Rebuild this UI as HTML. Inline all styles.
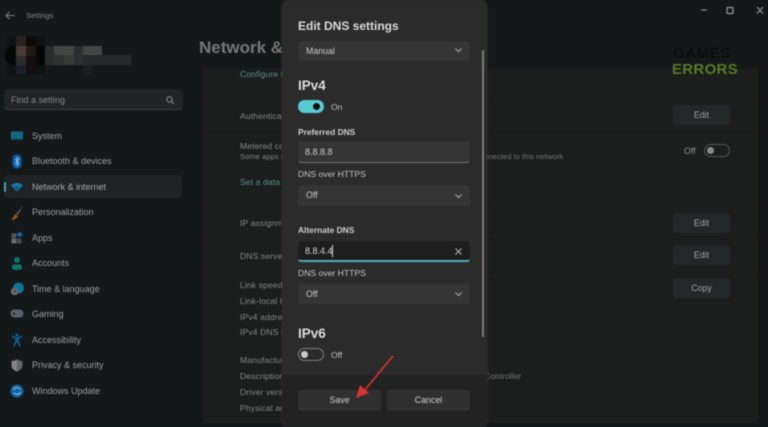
<!DOCTYPE html>
<html><head><meta charset="utf-8"><style>
html,body{margin:0;padding:0;background:#141819}
#r{position:relative;width:768px;height:427px;overflow:hidden;background:#141819;font-family:"Liberation Sans",sans-serif;color:#b5b6b6;font-size:9px;filter:blur(.4px)}
#r div,#r span.a{position:absolute}
.t{white-space:nowrap;line-height:12px}
.n{font-size:9px;color:#9d9e9e;left:32px;white-space:nowrap;line-height:12px}
.l{left:240px;font-size:8.6px;color:#858786;white-space:nowrap;line-height:12px;letter-spacing:.1px}
.lk{color:#5a8d8c}
.b{left:673px;width:57px;height:20px;background:#242727;border-radius:3px;color:#a0a1a1;font-size:8.8px;text-align:center;line-height:20px}
.dd{left:298px;width:172px;height:20px;background:#353535;border-radius:3px;color:#c8c8c8;font-size:8.8px;line-height:20px;text-indent:8px}
.lb{left:298px;color:#cdcdcd;font-size:8.4px;font-weight:bold;line-height:12px;white-space:nowrap}
.lc{left:298px;color:#c4c4c4;font-size:8.6px;line-height:12px;white-space:nowrap}
.h{left:298px;color:#dcdcdc;font-size:13.5px;font-weight:bold;line-height:16px}
svg{position:absolute;overflow:visible}
</style></head><body><div id="r">

<!-- title bar -->
<svg style="left:5px;top:11px" width="12" height="10" fill="none" stroke="#7f8080" stroke-width="1"><path d="M1 4.500H9.500M4.500 1L1 4.500L4.500 8"/></svg>
<div class="t" style="left:26px;top:10px;font-size:7.6px;color:#858686">Settings</div>
<svg style="left:697px;top:5px" width="66" height="14" fill="none" stroke="#9a9b9b" stroke-width="1"><path d="M4 5H10"/><rect x="30" y="2.500" width="6" height="6" rx="1" stroke-width="1.200"/><path d="M60 2L66 8.500M66 2L60 8.500"/></svg>

<!-- avatar -->
<div style="left:7px;top:36px;width:38px;height:38px;background:#0a0b0b;opacity:.5"></div>
<div style="left:5px;top:46px;width:40px;height:19px;background:#050606;border-radius:9px 0 0 9px"></div>
<div style="left:16px;top:36px;width:10px;height:10px;background:#2a211c"></div>
<div style="left:16px;top:46px;width:10px;height:10px;background:#4a3d35"></div>
<div style="left:16px;top:56px;width:10px;height:9px;background:#2c2c2f"></div>
<div style="left:16px;top:65px;width:10px;height:9px;background:#1d2029"></div>
<div style="left:26px;top:36px;width:10px;height:10px;background:#0c0b0a"></div>
<div style="left:26px;top:46px;width:10px;height:10px;background:#211914"></div>
<div style="left:26px;top:56px;width:10px;height:18px;background:#120e0c"></div>
<div style="left:45px;top:46px;width:9px;height:19px;background:#2a2d2e"></div>
<div style="left:54px;top:46px;width:20px;height:9px;background:#444646"></div>
<div style="left:54px;top:55px;width:10px;height:10px;background:#303333"></div>
<div style="left:64px;top:55px;width:10px;height:10px;background:#373a3a"></div>
<div style="left:74px;top:46px;width:9px;height:19px;background:#2c2f2f"></div>
<div style="left:83px;top:46px;width:19px;height:9px;background:#444646"></div>
<div style="left:83px;top:55px;width:48px;height:10px;background:#272a2a"></div>
<div style="left:83px;top:65px;width:9px;height:9px;background:#1c1f1f"></div>

<!-- search -->
<div style="left:4px;top:89px;width:179px;height:21px;background:#212424;border-radius:4px;border-bottom:1px solid #3a3c3c;box-sizing:border-box"></div>
<div class="t" style="left:11px;top:94px;font-size:9px;color:#858686">Find a setting</div>
<svg style="left:166px;top:96px" width="9" height="9" fill="none" stroke="#858686" stroke-width="1.100"><circle cx="3.500" cy="3.500" r="2.700"/><path d="M5.500 5.500L8 8"/></svg>

<!-- nav -->
<div style="left:4px;top:175px;width:178px;height:23px;background:#202323;border-radius:4px"></div>
<div style="left:4px;top:182px;width:2px;height:10px;background:#4aa3ad;border-radius:1px"></div>
<div class="n" style="top:130px">System</div>
<div class="n" style="top:155px">Bluetooth &amp; devices</div>
<div class="n" style="top:181px;color:#a8a9a9">Network &amp; internet</div>
<div class="n" style="top:206px">Personalization</div>
<div class="n" style="top:232px">Apps</div>
<div class="n" style="top:257px">Accounts</div>
<div class="n" style="top:283px">Time &amp; language</div>
<div class="n" style="top:308px">Gaming</div>
<div class="n" style="top:334px">Accessibility</div>
<div class="n" style="top:359px">Privacy &amp; security</div>
<div class="n" style="top:385px">Windows Update</div>

<!-- nav icons -->
<svg style="left:10px;top:130px" width="14" height="12"><rect x="1" y="1.500" width="12" height="8" fill="#126a88"/><rect x="1" y="8.500" width="12" height="1.500" fill="#0c4a60"/></svg>
<svg style="left:12px;top:154px" width="10" height="16"><rect x="0.500" y="0.500" width="9" height="14" rx="4" fill="#095ca8"/><path d="M3 5L7 9.500L5 11.500V3.500L7 5.500L3 10" stroke="#a9c8df" stroke-width=".8" fill="none"/></svg>
<svg style="left:10px;top:182px" width="14" height="11"><path d="M1 3Q7 -1 13 3L7 10Z" fill="#127aa6"/><path d="M4 5Q7 3.500 10 5L7 10Z" fill="#0c5b82"/></svg>
<svg style="left:10px;top:205px" width="14" height="16"><path d="M13 1L6 9L7.500 10.500Z" fill="#636464"/><path d="M5 9L8 11.500L4 15L1 14.500Q3.500 13 5 9Z" fill="#98541f"/></svg>
<svg style="left:10px;top:230px" width="14" height="14"><rect x="1.500" y="3.500" width="5" height="4.500" fill="#555757"/><rect x="1.500" y="8.500" width="5" height="5" fill="#686a6a"/><rect x="7" y="8.500" width="4.500" height="5" fill="#4a4c4c"/><path d="M9.500 1.500L13 4.500L9.500 7.500L6.500 4.500Z" fill="#0e66a5"/></svg>
<svg style="left:11px;top:256px" width="12" height="15"><circle cx="6" cy="4" r="3" fill="#0e766b"/><path d="M1 13V10.500Q1 8.500 3 8.500H9Q11 8.500 11 10.500V13Q6 15 1 13Z" fill="#0e766b"/></svg>
<svg style="left:10px;top:282px" width="14" height="15"><circle cx="8.500" cy="6" r="5.500" fill="#10749b"/><circle cx="4.500" cy="9.500" r="3.800" fill="#6a6c6c"/><path d="M4.500 7.500V9.700H6.300" stroke="#222" stroke-width=".7" fill="none"/></svg>
<svg style="left:10px;top:309px" width="14" height="10"><rect x="0.500" y="0.500" width="13" height="8" rx="4" fill="#606262"/><circle cx="4" cy="4.500" r="1.300" fill="#2a2c2c"/><circle cx="10" cy="4.500" r="1.300" fill="#1c6a9e"/></svg>
<svg style="left:11px;top:333px" width="12" height="14" fill="#0e5a90"><circle cx="6" cy="2" r="1.600"/><path d="M0.500 3.500L1 2.500L6 4.500L11 2.500L11.500 3.500L8 6V8.500L10 13L8.500 13.500L6 9L3.500 13.500L2 13L4 8.500V6Z"/></svg>
<svg style="left:11px;top:359px" width="12" height="13"><path d="M6 .5Q9 2 11.500 2V6.500Q11.500 10.500 6 12.500Q.5 10.500 .5 6.500V2Q3 2 6 .5Z" fill="#656767"/><path d="M6 .5V12.500Q.5 10.500 .5 6.500V2Q3 2 6 .5Z" fill="#828484"/></svg>
<svg style="left:10px;top:384px" width="14" height="14"><circle cx="7" cy="7" r="6.500" fill="#0e64a2"/><path d="M3.500 6Q5 3 8 3.800Q9.500 4.200 10.500 5.500M10.500 8Q9 11 6 10.200Q4.500 9.800 3.500 8.500" stroke="#a9cbe0" stroke-width="1" fill="none"/></svg>

<!-- right content -->
<div class="t" style="left:199px;top:38px;font-size:17px;font-weight:bold;color:#767878;line-height:20px">Network &amp;</div>
<div style="left:203px;top:68px;width:555px;height:355px;background:#1b1e1d"></div>
<div style="left:203px;top:98px;width:555px;height:1px;background:#171a19"></div>
<div style="left:203px;top:131px;width:555px;height:1px;background:#171a19"></div>
<div style="left:203px;top:206px;width:555px;height:1px;background:#171a19"></div>
<div style="left:203px;top:239px;width:555px;height:1px;background:#171a19"></div>
<div style="left:203px;top:272px;width:555px;height:1px;background:#171a19"></div>

<div class="l lk" style="top:68px">Configure f</div>
<div class="l" style="top:110px">Authenticat</div>
<div class="l" style="top:140px">Metered co</div>
<div class="l" style="top:151px;font-size:7.5px">Some apps n</div>
<div class="l lk" style="top:176px">Set a data l</div>
<div class="l" style="top:217px">IP assignme</div>
<div class="l" style="top:250px">DNS server</div>
<div class="l" style="top:279px">Link speed</div>
<div class="l" style="top:295px">Link-local II</div>
<div class="l" style="top:311px">IPv4 addres</div>
<div class="l" style="top:326px">IPv4 DNS s</div>
<div class="l" style="top:354px">Manufactur</div>
<div class="l" style="top:370px">Description</div>
<div class="l" style="top:386px">Driver versi</div>
<div class="l" style="top:402px">Physical ad</div>

<div class="t" style="left:484px;top:151px;font-size:7.7px;color:#727475">nnected to this network</div>
<div class="t" style="left:484px;top:370px;font-size:8.6px;color:#727475">Controller</div>

<div class="b" style="top:105px">Edit</div>
<div class="b" style="top:213px">Edit</div>
<div class="b" style="top:245px">Edit</div>
<div class="b" style="top:278px">Copy</div>

<div class="t" style="left:684px;top:145px;font-size:8.8px;color:#939494">Off</div>
<div style="left:704px;top:144px;width:26px;height:13px;box-sizing:border-box;border:1px solid #555757;border-radius:7px"></div>
<div style="left:707px;top:147px;width:7px;height:7px;border-radius:50%;background:#8a8b8b"></div>

<!-- watermark -->
<div class="t" style="left:673px;top:45px;font-size:15px;font-weight:bold;color:#0b0d0d;line-height:18px;letter-spacing:.6px">GAMES</div>
<div class="t" style="left:672px;top:61px;font-size:15px;font-weight:bold;color:#587a24;line-height:18px;letter-spacing:.3px">ERRORS</div>

<!-- dialog -->
<div style="left:282px;top:0;width:205px;height:427px;background:#2b2b2b;border-radius:7px;box-shadow:0 0 2px #3a3a3a"></div>
<div style="left:282px;top:375px;width:205px;height:52px;background:#222222;border-radius:0 0 7px 7px"></div>

<div class="t" style="left:298px;top:18px;font-size:12px;font-weight:bold;color:#dadada;line-height:16px">Edit DNS settings</div>

<div class="dd" style="top:41px">Manual</div>
<svg style="left:455px;top:48px" width="7" height="5" fill="none" stroke="#aeaeae"><path d="M.5 .5L3.500 3.500L6.500 .5"/></svg>

<div class="h" style="top:78px">IPv4</div>
<div style="left:298px;top:100px;width:26px;height:13px;background:#58cbd3;border-radius:7px"></div>
<div style="left:313px;top:103px;width:7px;height:7px;background:#0a0a0a;border-radius:50%"></div>
<div class="lc" style="left:331px;top:101px">On</div>

<div class="lb" style="top:126px">Preferred DNS</div>
<div style="left:298px;top:142px;width:172px;height:21px;box-sizing:border-box;background:#353535;border-radius:3px;border-bottom:1px solid #747474"></div>
<div class="t" style="left:305px;top:146px;font-size:9px;color:#c8c8c8">8.8.8.8</div>

<div class="lc" style="top:168px">DNS over HTTPS</div>
<div class="dd" style="top:185px;height:21px;line-height:21px">Off</div>
<svg style="left:455px;top:194px" width="7" height="5" fill="none" stroke="#aeaeae"><path d="M.5 .5L3.500 3.500L6.500 .5"/></svg>

<div class="lb" style="top:224px">Alternate DNS</div>
<div style="left:298px;top:241px;width:172px;height:21px;box-sizing:border-box;background:#1e1e1e;border-radius:3px;border-bottom:2px solid #4db4bb"></div>
<div class="t" style="left:305px;top:245px;font-size:9px;color:#d4d4d4">8.8.4.4</div>
<div style="left:332px;top:245px;width:1px;height:12px;background:#d4d4d4"></div>
<svg style="left:455px;top:248px" width="7" height="7" fill="none" stroke="#aeaeae" stroke-width="1.100"><path d="M.5 .5L6.500 6.500M6.500 .5L.5 6.500"/></svg>

<div class="lc" style="top:267px">DNS over HTTPS</div>
<div class="dd" style="top:284px;height:20px">Off</div>
<svg style="left:455px;top:292px" width="7" height="5" fill="none" stroke="#aeaeae"><path d="M.5 .5L3.500 3.500L6.500 .5"/></svg>

<div class="h" style="top:326px">IPv6</div>
<div style="left:298px;top:348px;width:26px;height:13px;box-sizing:border-box;border:1px solid #808080;border-radius:7px"></div>
<div style="left:301px;top:351px;width:7px;height:7px;background:#c8c8c8;border-radius:50%"></div>
<div class="lc" style="left:331px;top:349px">Off</div>

<!-- scrollbar -->
<div style="left:482px;top:50px;width:2px;height:287px;background:#7c7c7c;border-radius:1px"></div>

<!-- buttons -->
<div style="left:298px;top:390px;width:83px;height:21px;background:#303030;border-radius:3px;color:#cdcdcd;font-size:8.8px;line-height:21px;text-align:center">Save</div>
<div style="left:387px;top:390px;width:83px;height:21px;background:#303030;border-radius:3px;color:#cdcdcd;font-size:8.8px;line-height:21px;text-align:center">Cancel</div>

<!-- arrow -->
<svg style="left:350px;top:350px" width="50" height="50"><path d="M42.500 6.500L14 41" stroke="#dd3030" stroke-width="1.600" fill="none" stroke-linecap="round"/><path d="M6 48L10 35L19 43Z" fill="#dd3030"/></svg>

</div></body></html>
